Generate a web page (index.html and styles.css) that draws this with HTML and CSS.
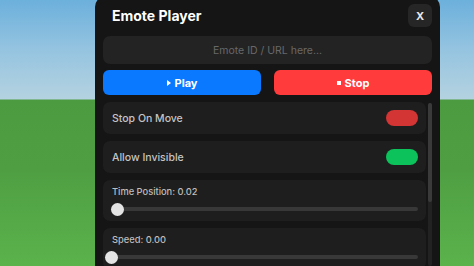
FILE: index.html
```html
<!DOCTYPE html>
<html>
<head>
<meta charset="utf-8">
<link rel="stylesheet" href="styles.css">
</head>
<body>
<div class="scene">
  <div class="panel">
    <div class="header">
      <div class="title">Emote Player</div>
      <div class="close">X</div>
    </div>
    <div class="input">Emote ID / URL here...</div>
    <div class="actions">
      <div class="btn play"><span class="tri"></span>Play</div>
      <div class="btn stop"><span class="sq"></span>Stop</div>
    </div>
    <div class="scroll">
      <div class="list">
        <div class="row toggle-row">
          <span class="label">Stop On Move</span>
          <span class="toggle off"></span>
        </div>
        <div class="row toggle-row">
          <span class="label">Allow Invisible</span>
          <span class="toggle on"></span>
        </div>
        <div class="row slider-row">
          <span class="slabel">Time Position: 0.02</span>
          <div class="track"><span class="thumb" style="left: 6.5px"></span></div>
        </div>
        <div class="row slider-row">
          <span class="slabel">Speed: 0.00</span>
          <div class="track"><span class="thumb" style="left: 0px"></span></div>
        </div>
      </div>
      <div class="scrollbar"><div class="sthumb"></div></div>
    </div>
  </div>
</div>
</body>
</html>
```
FILE: styles.css
```css
html, body {
  margin: 0;
  padding: 0;
  width: 474px;
  height: 266px;
  overflow: hidden;
}
body {
  font-family: "Inter", "Open Sans", sans-serif;
  background:
    linear-gradient(to bottom, #6cb0dc 0px, #95c4e0 50px, #b4d2e0 99px, #4d9b40 100px, #4f9f42 170px, #5bb34c 266px);
}
.scene {
  width: 474px;
  height: 266px;
  overflow: hidden;
}
.panel {
  margin-left: 95px;
  margin-top: -4px;
  width: 345px;
  height: 270px;
  overflow: hidden;
  background: #151515;
  border-radius: 11px 11px 0 0;
  padding: 8px 8px 0 8px;
  box-sizing: border-box;
  display: flex;
  flex-direction: column;
}
.header {
  display: flex;
  justify-content: space-between;
  align-items: center;
  height: 23px;
  flex-shrink: 0;
}
.title {
  color: #fff;
  font-weight: 700;
  font-size: 14px;
  padding-left: 9px;
}
.close {
  width: 24px;
  height: 23px;
  border-radius: 6px;
  background: #262626;
  color: #e8e8e8;
  font-weight: 700;
  font-size: 11px;
  display: flex;
  align-items: center;
  justify-content: center;
}
.input {
  margin-top: 9px;
  height: 28px;
  flex-shrink: 0;
  border-radius: 7px;
  background: #232323;
  color: #686868;
  font-size: 10.5px;
  display: flex;
  align-items: center;
  justify-content: center;
}
.actions {
  margin-top: 6px;
  display: flex;
  gap: 13px;
  flex-shrink: 0;
}
.btn {
  flex: 1;
  height: 25px;
  border-radius: 6px;
  color: #fff;
  font-weight: 700;
  font-size: 11px;
  display: flex;
  align-items: center;
  justify-content: center;
  gap: 4px;
}
.play { background: #0a78ff; }
.stop { background: #ff3b3b; }
.tri {
  width: 0;
  height: 0;
  border-left: 4.5px solid #fff;
  border-top: 3px solid transparent;
  border-bottom: 3px solid transparent;
}
.sq {
  width: 4px;
  height: 4px;
  background: #fff;
}
.scroll {
  margin-top: 7px;
  display: flex;
  gap: 2px;
  flex: 1;
  min-height: 0;
}
.list {
  flex: 1;
  display: flex;
  flex-direction: column;
  gap: 7px;
}
.row {
  background: #1e1e1e;
  border-radius: 7px;
  box-sizing: border-box;
  padding: 0 8px 0 9px;
  flex-shrink: 0;
}
.toggle-row {
  height: 32px;
  display: flex;
  align-items: center;
  justify-content: space-between;
}
.label {
  color: #c4c4c4;
  font-size: 10.5px;
  font-weight: 500;
}
.toggle {
  width: 32px;
  height: 16px;
  border-radius: 8px;
}
.toggle.off { background: #d33434; }
.toggle.on { background: #0cc25a; }
.slider-row {
  height: 41px;
  display: flex;
  flex-direction: column;
  padding-top: 5px;
}
.slabel {
  color: #bdbdbd;
  font-size: 9.3px;
  font-weight: 500;
  line-height: 13px;
}
.track {
  position: relative;
  margin-top: 9px;
  margin-left: -1px;
  height: 4px;
  border-radius: 2px;
  background: #383838;
}
.thumb {
  position: absolute;
  top: -4.5px;
  margin-left: -6.5px;
  width: 13px;
  height: 13px;
  border-radius: 50%;
  background: #e4e4e4;
}
.scrollbar {
  width: 4px;
  background: #222;
  border-radius: 2px;
  margin-top: 1px;
}
.sthumb {
  height: 99px;
  background: #3a3a3a;
  border-radius: 2px;
}
```
